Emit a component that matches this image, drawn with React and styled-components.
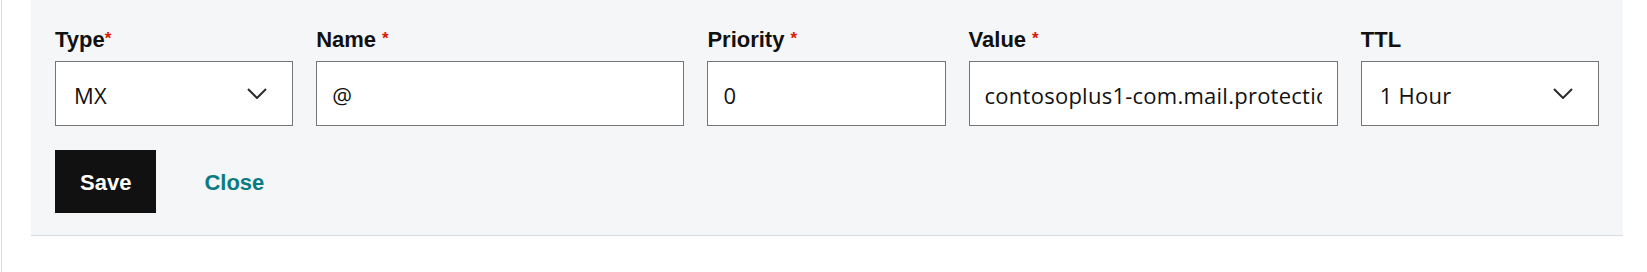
import React from "react";
import styled, { createGlobalStyle } from "styled-components";

const Global = createGlobalStyle`
  html, body { margin: 0; padding: 0; background: #ffffff; }
  body { font-family: "Liberation Sans", Arial, sans-serif; }
  * { box-sizing: border-box; }
`;

const Page = styled.div`
  height: 272px;
  padding-left: 1px;
  display: flex;
`;

const Frame = styled.div`
  flex: 1;
  border-left: 1px solid #d6dce2;
  padding: 0 24px 0 29px;
`;

const Panel = styled.section`
  background: #f5f6f8;
  border-bottom: 1px solid #d8dde3;
  padding: 27px 24px 22px;
  display: flex;
  flex-direction: column;
  gap: 24px;
`;

const Fields = styled.div`
  display: grid;
  grid-template-columns: 238fr 368fr 238fr 369fr 238fr;
  column-gap: 23px;
`;

const Field = styled.div`
  display: flex;
  flex-direction: column;
  gap: 9px;
  min-width: 0;
`;

const Label = styled.label`
  font-family: "Liberation Sans", Arial, sans-serif;
  font-weight: 700;
  font-size: 22px;
  line-height: 25px;
  color: #111111;
  white-space: nowrap;
`;

const Req = styled.span`
  color: #db1802;
  font-size: 17px;
  vertical-align: top;
  margin-left: ${(p) => (p.$tight ? "0" : "6px")};
  position: relative;
  top: -1px;
`;

const fieldText = `
  height: 65px;
  background: #ffffff;
  border: 1px solid #767676;
  border-radius: 0;
  font-family: "Open Sans", "Liberation Sans", sans-serif;
  font-size: 22px;
  letter-spacing: 0.25px;
  color: #111111;
`;

const Input = styled.input`
  ${fieldText}
  width: 100%;
  padding: 2px 15px 0 15px;
  outline: none;
  margin: 0;
`;

const Select = styled.div`
  ${fieldText}
  display: flex;
  align-items: center;
  padding: 2px 25px 0 18px;
`;

const SelectText = styled.span`
  flex: 1;
  white-space: nowrap;
`;

const Chevron = styled.svg`
  width: 20px;
  height: 11px;
  flex: none;
  margin-top: -2px;
`;

const Actions = styled.div`
  display: flex;
  align-items: center;
  gap: 22px;
`;

const Button = styled.button`
  height: 63px;
  padding: 3px ${(p) => (p.$primary ? "25px" : "26px")} 0;
  border: none;
  border-radius: 0;
  background: ${(p) => (p.$primary ? "#111111" : "transparent")};
  color: ${(p) => (p.$primary ? "#ffffff" : "#0a7b82")};
  font-family: "Liberation Sans", Arial, sans-serif;
  font-weight: 700;
  font-size: 22px;
  cursor: pointer;
`;

const Down = () => (
  <Chevron viewBox="0 0 20 11" fill="none">
    <polyline points="1,1 10,10 19,1" stroke="#2b2b2b" strokeWidth="2" />
  </Chevron>
);

export default function App() {
  return (
    <>
      <Global />
      <Page>
        <Frame>
          <Panel>
            <Fields>
              <Field>
                <Label>
                  Type<Req $tight>*</Req>
                </Label>
                <Select>
                  <SelectText>MX</SelectText>
                  <Down />
                </Select>
              </Field>
              <Field>
                <Label>
                  Name<Req>*</Req>
                </Label>
                <Input readOnly value="@" />
              </Field>
              <Field>
                <Label>
                  Priority<Req>*</Req>
                </Label>
                <Input readOnly value="0" />
              </Field>
              <Field>
                <Label>
                  Value<Req>*</Req>
                </Label>
                <Input readOnly value="contosoplus1-com.mail.protection.outlook.com" />
              </Field>
              <Field>
                <Label>TTL</Label>
                <Select>
                  <SelectText>1 Hour</SelectText>
                  <Down />
                </Select>
              </Field>
            </Fields>
            <Actions>
              <Button $primary>Save</Button>
              <Button>Close</Button>
            </Actions>
          </Panel>
        </Frame>
      </Page>
    </>
  );
}
